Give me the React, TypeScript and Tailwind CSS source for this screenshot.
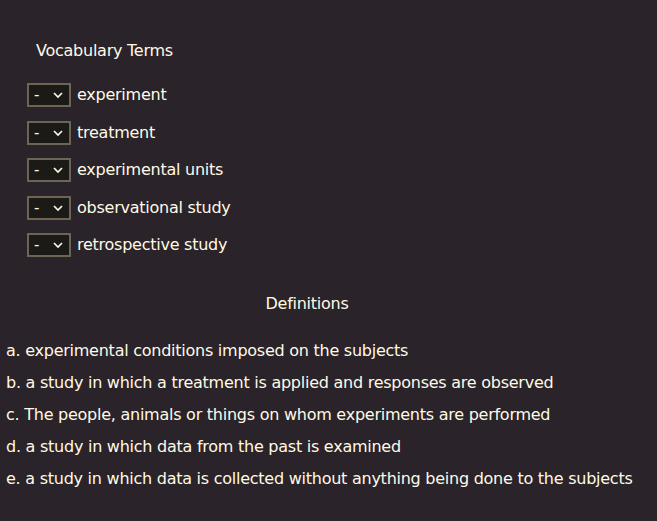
const terms = ['experiment', 'treatment', 'experimental units', 'observational study', 'retrospective study'];

const definitions = [
  'a. experimental conditions imposed on the subjects',
  'b. a study in which a treatment is applied and responses are observed',
  'c. The people, animals or things on whom experiments are performed',
  'd. a study in which data from the past is examined',
  'e. a study in which data is collected without anything being done to the subjects',
];

const TermSelect = () => (
  <div className="relative h-6 w-11 shrink-0">
    <select
      defaultValue="-"
      className="h-6 w-11 appearance-none border-2 border-[#6b6556] bg-[#1c1a16] pl-[5px] text-[15px] leading-5 text-[#fff8e0] outline-none"
    >
      <option>-</option>
      <option>a</option>
      <option>b</option>
      <option>c</option>
      <option>d</option>
      <option>e</option>
    </select>
    <svg
      className="pointer-events-none absolute left-[26px] top-[8px] h-[8px] w-[10px]"
      viewBox="0 0 10 8"
      fill="none"
      stroke="#fff8e0"
      strokeWidth="1.7"
    >
      <path d="M1 2l4 4 4-4" />
    </svg>
  </div>
);

export default function App() {
  return (
    <div className="min-h-[521px] w-full bg-[#2a232a] font-['DejaVu_Sans',sans-serif] text-[16px] tracking-[-0.25px] text-[#fffae6]">
      <div className="pl-[27px] pt-[39px]">
        <h2 className="pl-[9px] leading-6">Vocabulary Terms</h2>
        <div className="mt-[20px] flex flex-col gap-[13.5px]">
          {terms.map((term) => (
            <div key={term} className="flex items-center gap-[6px]">
              <TermSelect />
              <span className="leading-6">{term}</span>
            </div>
          ))}
        </div>
      </div>

      <h2 className="mt-[35px] w-[614px] text-center leading-6">Definitions</h2>

      <ul className="mt-[19px] pl-[6px]">
        {definitions.map((d) => (
          <li key={d} className="leading-8">
            {d}
          </li>
        ))}
      </ul>
    </div>
  );
}
